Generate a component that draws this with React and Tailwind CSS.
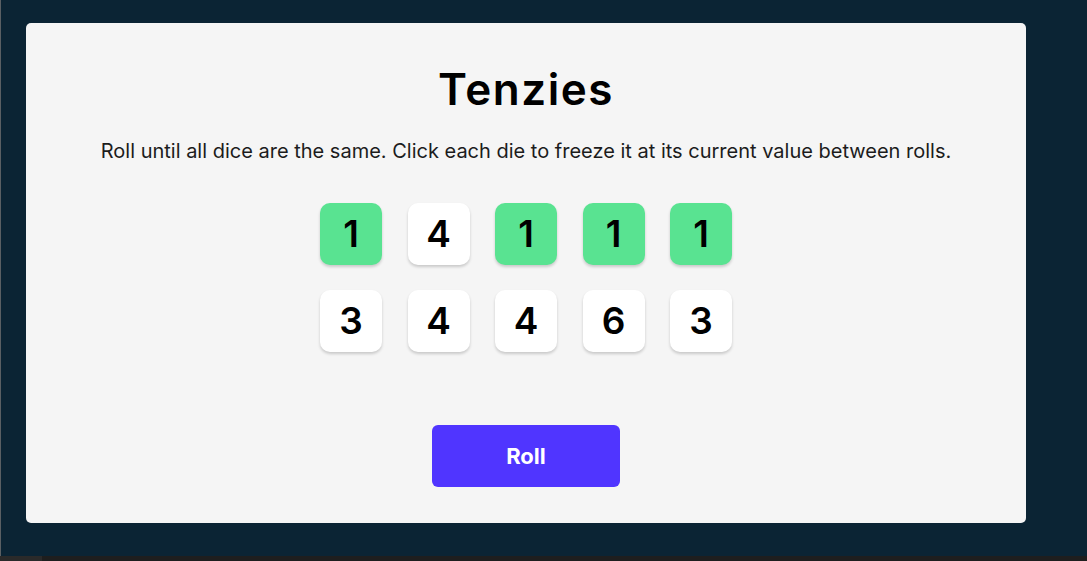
const dice = [
  { value: 1, held: true },
  { value: 4, held: false },
  { value: 1, held: true },
  { value: 1, held: true },
  { value: 1, held: true },
  { value: 3, held: false },
  { value: 4, held: false },
  { value: 4, held: false },
  { value: 6, held: false },
  { value: 3, held: false },
]

function Die({ value, held }) {
  return (
    <button
      className={`w-[62px] h-[62px] rounded-[10px] shadow-[0_2px_3px_rgba(0,0,0,0.18)] flex items-center justify-center text-[37px] font-semibold text-black ${
        held ? 'bg-[#59E391]' : 'bg-white'
      }`}
    >
      {value}
    </button>
  )
}

export default function App() {
  return (
    <div className="h-[561px] flex flex-col font-['Inter',sans-serif]">
      <main className="h-[556px] bg-[#0B2434] border-l border-[#5a5f63] pl-[25px] pt-[23px]">
        <section className="w-[1000px] h-[500px] bg-[#F5F5F5] rounded-[5px] flex flex-col items-center">
          <h1 className="mt-[38px] text-[44px] leading-[56px] font-semibold tracking-[0.035em] text-black">
            Tenzies
          </h1>
          <p className="mt-[21px] text-[20px] leading-[26px] text-[#1c1c1c]">
            Roll until all dice are the same. Click each die to freeze it at its current value between rolls.
          </p>
          <div className="mt-[39px] grid grid-cols-5 gap-x-[25.5px] gap-y-[25px]">
            {dice.map((d, i) => (
              <Die key={i} {...d} />
            ))}
          </div>
          <button className="mt-[73px] w-[188px] h-[62px] rounded-[6px] bg-[#5035FF] text-white text-[22px] font-bold">
            Roll
          </button>
        </section>
      </main>
      <div className="h-[5px] flex">
        <div className="w-[42px] bg-[#2a2a2a]" />
        <div className="flex-1 bg-[#1e1e1e]" />
      </div>
    </div>
  )
}
